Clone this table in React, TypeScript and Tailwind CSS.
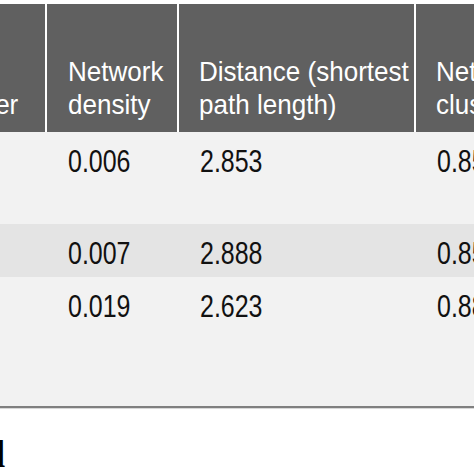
import React from "react";

const cols = ["w-[141px]", "w-[130px]", "w-[235px]", "w-[220px]"];

function HeaderCell({ w, pl, children }: { w: string; pl: string; children: React.ReactNode }) {
  return (
    <div className={`${w} ${pl} shrink-0 bg-[#606060] flex items-end pb-[11px] text-white text-[28px] leading-[33px] whitespace-nowrap`}>
      <div className="origin-left scale-x-[0.93]">{children}</div>
    </div>
  );
}

function Row({ h, bg, vals }: { h: string; bg: string; vals: string[] }) {
  return (
    <div className={`flex ${h} ${bg} gap-x-[2px]`}>
      {vals.map((v, i) => (
        <div
          key={i}
          className={`${cols[i]} shrink-0 pl-[21px] pt-[11px] text-[32px] leading-[36px] text-[#111] whitespace-nowrap`}
        >
          <span className="inline-block origin-left scale-x-[0.78]">{v}</span>
        </div>
      ))}
    </div>
  );
}

export default function App() {
  return (
    <div
      className="w-[474px] h-[474px] overflow-hidden bg-white relative"
      style={{ fontFamily: '"Liberation Sans", Arial, sans-serif' }}
    >
      <div className="ml-[-96px] pt-[4px] w-[760px]">
        <div className="flex h-[128px] gap-x-[2px] bg-white">
          <HeaderCell w={cols[0]} pl="pl-[26px]">
            Node
            <br />
            number
          </HeaderCell>
          <HeaderCell w={cols[1]} pl="pl-[21px]">
            Network
            <br />
            density
          </HeaderCell>
          <HeaderCell w={cols[2]} pl="pl-[20px]">
            Distance (shortest
            <br />
            path length)
          </HeaderCell>
          <HeaderCell w={cols[3]} pl="pl-[20px]">
            Network
            <br />
            clustering
          </HeaderCell>
        </div>
        <Row h="h-[92px]" bg="bg-[#f2f2f2]" vals={["", "0.006", "2.853", "0.853"]} />
        <Row h="h-[53px]" bg="bg-[#e4e4e4]" vals={["", "0.007", "2.888", "0.855"]} />
        <Row h="h-[129px]" bg="bg-[#f2f2f2]" vals={["", "0.019", "2.623", "0.881"]} />
        <div className="h-[2px] bg-[#808080]" />
        <div className="h-[1px] bg-[#d8d8d8]" />
      </div>
      <div
        className="mt-[26px] ml-[-5px] text-[37px] leading-[40px] font-bold text-black"
        style={{ fontFamily: '"Liberation Serif", "Times New Roman", serif' }}
      >
        l
      </div>
    </div>
  );
}
